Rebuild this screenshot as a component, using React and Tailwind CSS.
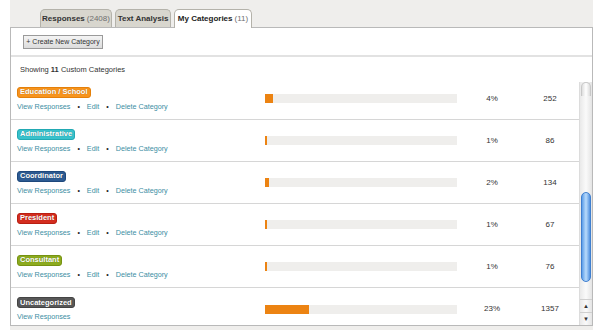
import React from "react";

const rows = [
  { name: "Education / School", color: "bg-[#f7941d] border-[#e4800a]", pct: 4, count: 252, full: true },
  { name: "Administrative", color: "bg-[#38c1cb] border-[#22a9b3]", pct: 1, count: 86, full: true },
  { name: "Coordinator", color: "bg-[#2d5b92] border-[#1d487c]", pct: 2, count: 134, full: true },
  { name: "President", color: "bg-[#d42d1f] border-[#b81f12]", pct: 1, count: 67, full: true },
  { name: "Consultant", color: "bg-[#8cab1e] border-[#779212]", pct: 1, count: 76, full: true },
  { name: "Uncategorized", color: "bg-[#585858] border-[#444444]", pct: 23, count: 1357, full: false },
];

function Row({ r, last }) {
  const fill = Math.max(2, Math.round((r.pct * 192) / 100));
  return (
    <div className={`flex items-center shrink-0 h-[42px] ${last ? "" : "border-b border-[#d6d6d6]"}`}>
      <div className="w-[254px] pl-[6px] flex flex-col gap-[4px]">
        <div className="flex">
          <span
            className={`${r.color} border rounded-[3px] h-[11px] px-[2px] flex items-center text-white font-bold text-[7.5px] leading-none [text-shadow:0_0_1px_rgba(0,0,0,0.35)]`}
          >
            {r.name}
          </span>
        </div>
        <div className="flex items-center text-[7.2px] leading-[9px] text-[#3d8ea3]">
          <span>View Responses</span>
          {r.full && (
            <>
              <span className="text-[#222] mx-[7px] text-[7px]">•</span>
              <span>Edit</span>
              <span className="text-[#222] mx-[7px] text-[7px]">•</span>
              <span>Delete Category</span>
            </>
          )}
        </div>
      </div>
      <div className="w-[192px] h-[9px] bg-[#efeeec] flex">
        <div className="h-full bg-[#ec8312]" style={{ width: fill + "px" }} />
      </div>
      <div className="w-[70px] text-center text-[8px] text-[#333]">{r.pct}%</div>
      <div className="w-[46px] text-center text-[8px] text-[#333]">{r.count}</div>
    </div>
  );
}

function Scrollbar() {
  return (
    <div className="w-[13px] mt-[4px] flex flex-col border-l border-[#dcdcdc] bg-gradient-to-r from-[#e9e9e9] via-[#fafafa] to-[#e4e4e4]">
      <div className="mx-[1px] h-[14px] rounded-t-[6px] border border-b-0 border-[#c8c8c8] bg-gradient-to-r from-[#dedede] via-white to-[#dcdcdc]" />
      <div className="h-[96px]" />
      <div className="mx-[1px] h-[90px] rounded-[6px] border border-[#3f7fcf] bg-gradient-to-r from-[#5b9de8] via-[#b9dbfb] to-[#4f90df]" />
      <div className="flex-1" />
      <div className="h-[13px] flex items-center justify-center border-t border-[#cfcfcf] text-[6px] text-[#333] leading-none">▲</div>
      <div className="h-[13px] flex items-center justify-center border-t border-[#cfcfcf] text-[6px] text-[#333] leading-none">▼</div>
    </div>
  );
}

export default function App() {
  return (
    <div className="w-[600px] h-[330px] bg-white overflow-hidden font-['Liberation_Sans',Arial,sans-serif]">
      <div className="ml-[10px] w-[583px] h-[330px] bg-[#efeeec] flex flex-col">
        <div className="h-[27px] flex items-end pl-[30px] gap-[3px] shrink-0">
          <div className="h-[18px] w-[72px] flex items-center justify-center bg-[#d8d6ce] border border-b-0 border-[#b4b2aa] rounded-t-[5px] text-[8px] font-bold text-[#333]">
            Responses<span className="font-normal text-[#6f6f6f] ml-[2px]">(2408)</span>
          </div>
          <div className="h-[18px] w-[56px] flex items-center justify-center bg-[#d8d6ce] border border-b-0 border-[#b4b2aa] rounded-t-[5px] text-[8px] font-bold text-[#333]">
            Text Analysis
          </div>
          <div className="h-[19px] w-[78px] -mb-px relative z-10 flex items-center justify-center bg-white border border-b-0 border-[#b4b2aa] rounded-t-[5px] text-[8px] font-bold text-[#222]">
            My Categories<span className="font-normal text-[#6f6f6f] ml-[2px]">(11)</span>
          </div>
        </div>
        <div className="h-[299px] bg-white border border-[#b9b9b9] flex flex-col shrink-0">
          <div className="h-[29px] border-b-2 border-[#e2e2e2] flex items-center pl-[12px] shrink-0">
            <button className="h-[14px] w-[80px] px-[2px] border border-[#9a9a9a] bg-gradient-to-b from-[#f4f4f4] to-[#dcdcdc] text-[7px] text-[#333] leading-none">
              + Create New Category
            </button>
          </div>
          <div className="h-[21px] flex items-center pl-[9px] text-[7.5px] text-[#333] shrink-0 pt-[5px]">
            Showing&nbsp;<b>11</b>&nbsp;Custom Categories
          </div>
          <div className="flex-1 flex overflow-hidden">
            <div className="flex-1 flex flex-col">
              {rows.map((r, i) => (
                <Row key={r.name} r={r} last={i === rows.length - 1} />
              ))}
            </div>
            <Scrollbar />
          </div>
        </div>
      </div>
    </div>
  );
}
